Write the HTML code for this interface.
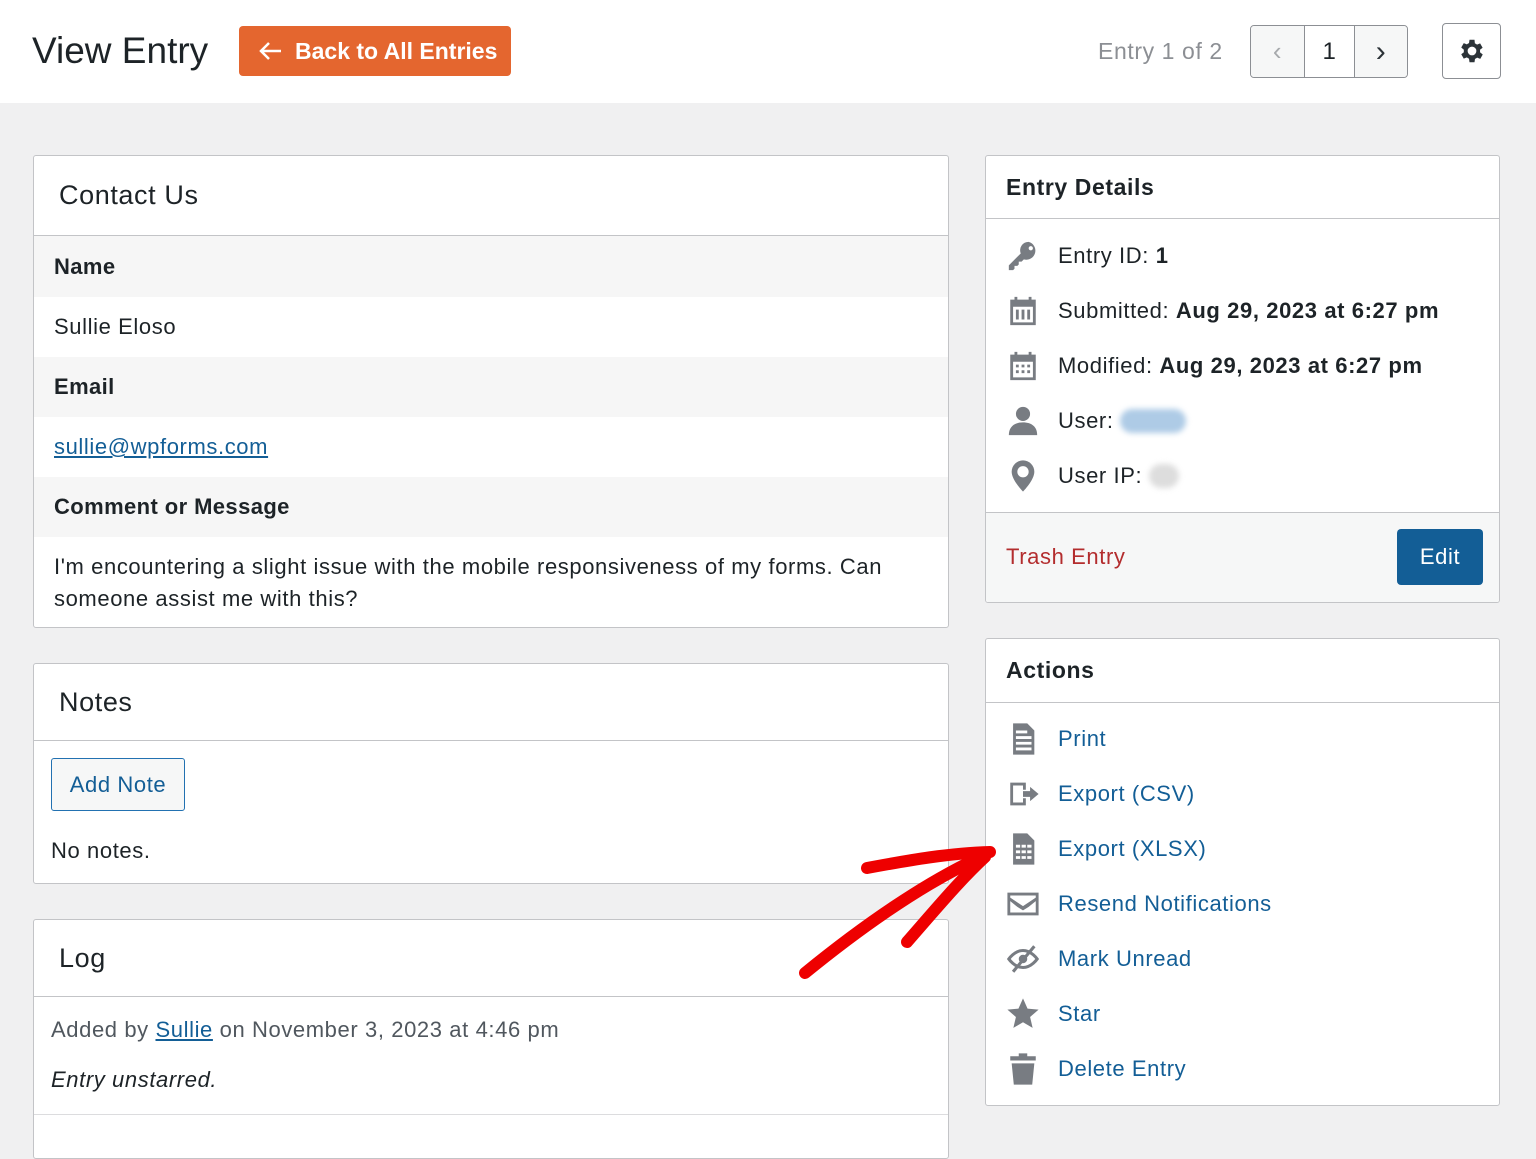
<!DOCTYPE html>
<html><head><meta charset="utf-8"><style>
*{box-sizing:border-box;margin:0;padding:0}
body{width:1536px;height:1129px;overflow:hidden;background:#f0f0f1;font-family:"Liberation Sans",Arial,sans-serif;color:#1d2327;position:relative;font-size:22px;letter-spacing:0.6px}
.abs{position:absolute}
.hdr{left:0;top:0;width:1536px;height:103px;background:#fff}
.card{position:absolute;background:#fff;border:1.5px solid #c3c4c7;border-radius:3px;overflow:hidden}
.row{position:absolute;left:0;right:0;padding-left:20px;display:flex;align-items:center}
.lab{background:#f6f6f6;font-weight:bold;letter-spacing:0.4px}
a{color:#135e96}
.it{position:absolute;left:20px;display:flex;align-items:center;height:40px}
.it svg{width:34px;height:34px;margin-right:18px}
.act{color:#135e96}
</style></head><body>
<div class="abs hdr"></div>
<div class="abs" style="left:32px;top:30px;font-size:37px;color:#1d2327;letter-spacing:0">View Entry</div>
<div class="abs" style="left:239px;top:26px;width:272px;height:50px;background:#e4662f;border-radius:4px;color:#fff;font-weight:bold;font-size:23px;display:flex;align-items:center;padding-left:18px;letter-spacing:0">
<svg width="28" height="24" viewBox="0 0 28 24" style="margin-right:10px"><path d="M24 12H4M12 4L4 12l8 8" stroke="#fff" stroke-width="2.5" fill="none"/></svg>Back to All Entries</div>
<div class="abs" style="left:1098px;top:38px;font-size:23px;color:#8c8f94">Entry 1 of 2</div>
<div class="abs" style="left:1250px;top:25px;width:158px;height:53px;border:1.5px solid #8c8f94;border-radius:4px;display:flex;overflow:hidden">
<div style="width:54px;background:#f6f7f7;border-right:1.5px solid #8c8f94;display:flex;align-items:center;justify-content:center;color:#a7aaad;font-size:26px">&#8249;</div>
<div style="width:50px;background:#fff;border-right:1.5px solid #8c8f94;display:flex;align-items:center;justify-content:center;font-size:24px">1</div>
<div style="flex:1;background:#f6f7f7;display:flex;align-items:center;justify-content:center;color:#2c3338;font-size:30px">&#8250;</div></div>
<div class="abs" style="left:1442px;top:23px;width:59px;height:56px;border:1.5px solid #8c8f94;border-radius:4px;background:#fff;display:flex;align-items:center;justify-content:center">
<svg width="30" height="30" viewBox="0 0 24 24"><path fill="#2c3338" d="M19.4 13a7.5 7.5 0 000-2l2.1-1.6-2-3.5-2.5 1a7 7 0 00-1.7-1L15 3h-4l-.4 2.7a7 7 0 00-1.7 1l-2.5-1-2 3.5L6.5 11a7.5 7.5 0 000 2l-2.1 1.6 2 3.5 2.5-1a7 7 0 001.7 1L11 21h4l.4-2.7a7 7 0 001.7-1l2.5 1 2-3.5zM13 15.5a3.5 3.5 0 110-7 3.5 3.5 0 010 7z" transform="translate(-1 0)"/></svg></div>

<div class="card" style="left:33px;top:155px;width:916px;height:473px">
<div class="row" style="top:0;height:80px;font-size:27px;padding-left:25px;border-bottom:1.5px solid #c3c4c7">Contact Us</div>
<div class="row lab" style="top:80px;height:61px">Name</div>
<div class="row" style="top:141px;height:60px">Sullie Eloso</div>
<div class="row lab" style="top:201px;height:60px">Email</div>
<div class="row" style="top:261px;height:60px"><a href="#">sullie@wpforms.com</a></div>
<div class="row lab" style="top:321px;height:60px">Comment or Message</div>
<div class="row" style="top:381px;height:91px;line-height:32px;padding-right:40px">I'm encountering a slight issue with the mobile responsiveness of my forms. Can someone assist me with this?</div>
</div>

<div class="card" style="left:33px;top:663px;width:916px;height:221px">
<div class="row" style="top:0;height:77px;font-size:27px;padding-left:25px;border-bottom:1.5px solid #c3c4c7">Notes</div>
<div class="abs" style="left:17px;top:94px;width:134px;height:53px;border:1.5px solid #2271b1;border-radius:3px;background:#f6f7f7;color:#135e96;display:flex;align-items:center;justify-content:center">Add Note</div>
<div class="abs" style="left:17px;top:174px">No notes.</div>
</div>

<div class="card" style="left:33px;top:919px;width:916px;height:240px">
<div class="row" style="top:0;height:77px;font-size:27px;padding-left:25px;border-bottom:1.5px solid #c3c4c7">Log</div>
<div class="abs" style="left:17px;top:97px;color:#50575e">Added by <a href="#">Sullie</a> on November 3, 2023 at 4:46 pm</div>
<div class="abs" style="left:17px;top:147px;font-style:italic">Entry unstarred.</div>
<div class="abs" style="left:0;right:0;top:194px;border-top:1.5px solid #dcdcde"></div>
</div>

<div class="card" style="left:985px;top:155px;width:515px;height:448px">
<div class="row" style="top:0;height:63px;font-weight:bold;font-size:23px;border-bottom:1.5px solid #c3c4c7">Entry Details</div>
<div class="it" style="top:80px"><svg viewBox="0 0 24 24"><path fill="#787c82" d="M16 2a6 6 0 00-5.6 8.2L2 18.6V22h3l1-1v-2h2l1-1v-2h2l1.6-1.6A6 6 0 1016 2zm1.5 3a1.5 1.5 0 110 3 1.5 1.5 0 010-3z"/></svg>Entry ID:&nbsp;<b>1</b></div>
<div class="it" style="top:135px"><svg viewBox="0 0 24 24"><path fill="#787c82" d="M3 4h3V2h2v2h8V2h2v2h3v18H3zm2 5v11h14V9zm2 2h2v7H7zm4 0h2v7h-2zm4 0h2v7h-2z"/></svg>Submitted:&nbsp;<b>Aug 29, 2023 at 6:27 pm</b></div>
<div class="it" style="top:190px"><svg viewBox="0 0 24 24"><path fill="#787c82" d="M3 4h3V2h2v2h8V2h2v2h3v18H3zm2 5v11h14V9zm2 2h2v2H7zm4 0h2v2h-2zm4 0h2v2h-2zM7 15h2v2H7zm4 0h2v2h-2zm4 0h2v2h-2z"/></svg>Modified:&nbsp;<b>Aug 29, 2023 at 6:27 pm</b></div>
<div class="it" style="top:245px"><svg viewBox="0 0 24 24"><circle cx="12" cy="7" r="5" fill="#787c82"/><path fill="#787c82" d="M2 22c0-6 4-9 10-9s10 3 10 9z"/></svg>User:&nbsp;<span style="display:inline-block;width:66px;height:24px;background:#aecbe6;border-radius:12px;filter:blur(3px)"></span></div>
<div class="it" style="top:300px"><svg viewBox="0 0 24 24"><path fill="#787c82" d="M12 1a8 8 0 00-8 8c0 6 8 14 8 14s8-8 8-14a8 8 0 00-8-8zm0 4a4 4 0 110 8 4 4 0 010-8z"/></svg>User IP:&nbsp;<span style="display:inline-block;width:30px;height:24px;background:#ddd;border-radius:12px;filter:blur(3px)"></span></div>
<div class="abs" style="left:0;right:0;top:356px;height:92px;background:#f6f7f7;border-top:1.5px solid #c3c4c7"></div>
<div class="abs" style="left:20px;top:388px;color:#b32d2e">Trash Entry</div>
<div class="abs" style="left:411px;top:373px;width:86px;height:56px;background:#135e96;border-radius:4px;color:#fff;display:flex;align-items:center;justify-content:center">Edit</div>
</div>

<div class="card" style="left:985px;top:638px;width:515px;height:468px">
<div class="row" style="top:0;height:64px;font-weight:bold;font-size:23px;border-bottom:1.5px solid #c3c4c7">Actions</div>
<div class="it act" style="top:80px"><svg viewBox="0 0 24 24"><path fill="#787c82" d="M5 1h10l5 5v17H5zm2 5v2h8V6zm0 4v2h11v-2zm0 4v2h11v-2zm0 4v2h11v-2z"/></svg>Print</div>
<div class="it act" style="top:135px"><svg viewBox="0 0 24 24"><path fill="#787c82" d="M3 4h11v5h-2V6H5v12h7v-3h2v5H3zm9 6h5V7l6 5-6 5v-3h-5z"/></svg>Export (CSV)</div>
<div class="it act" style="top:190px"><svg viewBox="0 0 24 24"><path fill="#787c82" d="M5 1h10l5 5v17H5zm2 8v2h3V9zm4 0v2h3V9zm4 0v2h3V9zM7 13v2h3v-2zm4 0v2h3v-2zm4 0v2h3v-2zM7 17v2h3v-2zm4 0v2h3v-2zm4 0v2h3v-2z"/></svg>Export (XLSX)</div>
<div class="it act" style="top:245px"><svg viewBox="0 0 24 24"><path fill="#787c82" d="M1 4h22v16H1zm2 2v1.5l9 6 9-6V6zm0 4v8l5-4zm18 0l-5 4 5 4zM3 18h18l-5-4-4 2.5L8 14z"/></svg>Resend Notifications</div>
<div class="it act" style="top:300px"><svg viewBox="0 0 24 24"><path fill="none" stroke="#787c82" stroke-width="2.2" d="M2 12s4-6 10-6 10 6 10 6-4 6-10 6S2 12 2 12zM5 21L20 3"/><circle cx="12" cy="12" r="3" fill="#787c82"/></svg>Mark Unread</div>
<div class="it act" style="top:355px"><svg viewBox="0 0 24 24"><path fill="#787c82" d="M12 1l3.2 7.2 7.8.7-6 5.2 1.8 7.7L12 17.8l-6.8 4 1.8-7.7-6-5.2 7.8-.7z"/></svg>Star</div>
<div class="it act" style="top:410px"><svg viewBox="0 0 24 24"><path fill="#787c82" d="M9 1h6v2h6v3H3V3h6zM4 8h16l-1.5 15h-13z"/></svg>Delete Entry</div>
</div>

<svg class="abs" style="left:0;top:0" width="1536" height="1129"><g stroke="#ee0000" stroke-width="12" stroke-linecap="round" fill="none"><path d="M805 973C870 920 930 880 985 855"/><path d="M867 868C910 860 950 853 990 852"/><path d="M907 942C935 910 960 880 985 857"/></g></svg>
</body></html>
